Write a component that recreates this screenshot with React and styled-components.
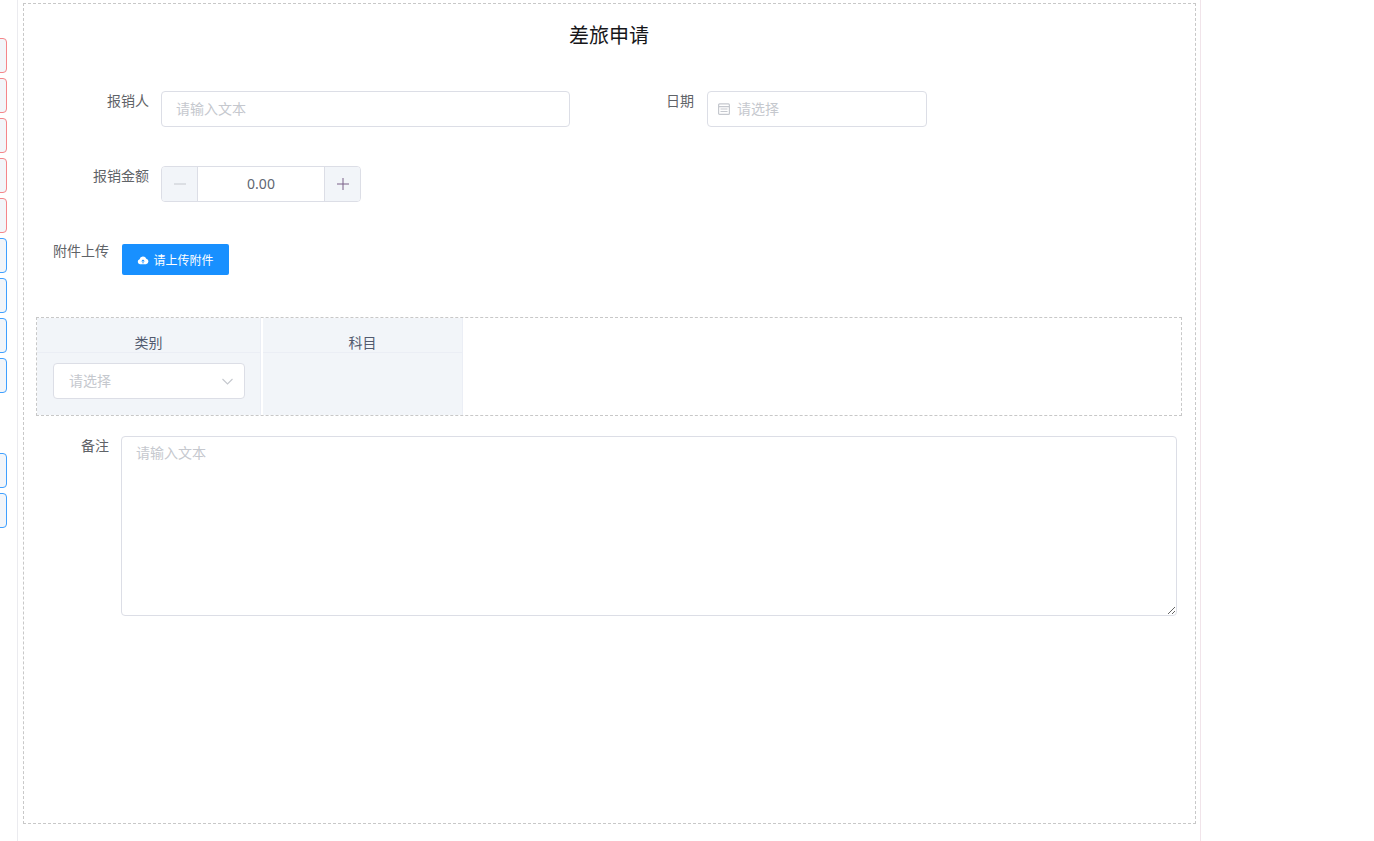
import React from "react";
import styled, { createGlobalStyle } from "styled-components";

const FONT = `"Noto Sans CJK SC", "Noto Sans", sans-serif`;

const Global = createGlobalStyle`
  html, body { margin: 0; padding: 0; height: 100%; background: #fff; overflow: hidden; }
  #root { height: 841px; }
  * { box-sizing: border-box; }
  body { font-family: ${FONT}; font-size: 14px; color: #515a6e; }
  ::placeholder { color: #c5c8ce; opacity: 1; }
`;

const Page = styled.div`
  display: flex;
  height: 841px;
  width: 1374px;
`;

const Palette = styled.aside`
  width: 17px;
  flex: none;
  overflow: hidden;
  padding-top: 38px;
  display: flex;
  flex-direction: column;
`;

const PaletteGroup = styled.div`
  display: flex;
  flex-direction: column;
  gap: 5px;
  margin-bottom: ${(p) => p.$after || 5}px;
`;

const PaletteItem = styled.div`
  width: 20px;
  height: 35px;
  margin-left: -13px;
  background: #f2f5f9;
  border-radius: 4px;
  border: 1px solid ${(p) => (p.$tone === "red" ? "#f5868a" : "#40a0ff")};
`;

const Canvas = styled.main`
  width: 1184px;
  flex: none;
  height: 841px;
  border-left: 1px solid #ebebef;
  border-right: 1px solid #f1e4ea;
  padding: 3px 4px 17px 5px;
`;

const Frame = styled.section`
  height: 821px;
  border: 1px dashed #c8c8c8;
  padding: 0 12px;
`;

const Title = styled.h1`
  margin: 0;
  height: 62px;
  padding: 16px 1px 0 0;
  text-align: center;
  font-size: 20px;
  line-height: 30px;
  font-weight: 400;
  color: #17171a;
`;

const Row = styled.div`
  display: flex;
  align-items: flex-start;
  margin-top: ${(p) => p.$top}px;
  height: ${(p) => p.$h}px;
`;

const Label = styled.label`
  width: ${(p) => p.$w}px;
  flex: none;
  padding-right: ${(p) => p.$pr || 12}px;
  text-align: right;
  font-size: 14px;
  line-height: 20px;
  color: #5f6368;
  margin-top: ${(p) => p.$mt ?? -1}px;
`;

const TextInput = styled.input`
  width: ${(p) => p.$w}px;
  height: 36px;
  border: 1px solid #dcdee6;
  border-radius: 4px;
  padding: 0 14px 2px 14px;
  font: 14px ${FONT};
  color: #515a6e;
  background: #fff;
  outline: none;
`;

const DateBox = styled.div`
  width: 220px;
  height: 36px;
  border: 1px solid #dcdee6;
  border-radius: 4px;
  display: flex;
  align-items: center;
  padding-left: 10px;
  gap: 7px;
  color: #c5c8ce;
  font-size: 14px;
`;

const HintText = styled.span`
  line-height: 20px;
  margin-top: -2px;
`;

const Stepper = styled.div`
  width: 200px;
  height: 36px;
  border: 1px solid #dcdee6;
  border-radius: 4px;
  display: flex;
  overflow: hidden;
`;

const StepButton = styled.div`
  width: 36px;
  flex: none;
  background: #f2f5f9;
  display: flex;
  align-items: center;
  justify-content: center;
  border-${(p) => p.$side}: 1px solid #dcdee6;
`;

const StepValue = styled.div`
  flex: 1;
  text-align: center;
  font-size: 14px;
  line-height: 34px;
  color: #606672;
  font-family: "Noto Sans", sans-serif;
`;

const UploadButton = styled.button`
  width: 107px;
  height: 31px;
  border: 0;
  border-radius: 2px;
  background: #1890ff;
  color: #fff;
  font: 12px ${FONT};
  display: flex;
  align-items: center;
  justify-content: center;
  gap: 4px;
  padding: 0;
`;

const GridBox = styled.div`
  margin-top: 42px;
  width: 1146px;
  height: 99px;
  border: 1px dashed #c8c8c8;
  display: flex;
  gap: 2px;
`;

const Cell = styled.div`
  width: ${(p) => p.$w}px;
  background: #f2f5f9;
  border-right: 1px solid #ebeef5;
  display: flex;
  flex-direction: column;
`;

const CellHead = styled.div`
  height: 35px;
  border-bottom: 1px solid #ebeef5;
  text-align: center;
  font-size: 14px;
  line-height: 20px;
  padding-top: 14px;
  color: #515a6e;
`;

const CellBody = styled.div`
  padding: 10px 15px 10px 16px;
`;

const Select = styled.div`
  height: 36px;
  background: #fff;
  border: 1px solid #dcdee6;
  border-radius: 4px;
  display: flex;
  align-items: center;
  justify-content: space-between;
  padding: 0 11px 0 15px;
  color: #c5c8ce;
  font-size: 14px;
`;

const Notes = styled.textarea`
  display: block;
  width: 1056px;
  height: 180px;
  border: 1px solid #dcdee6;
  border-radius: 4px;
  padding: 5px 14px 6px 14px;
  font: 14px/20px ${FONT};
  color: #515a6e;
  outline: none;
  background: #fff;
  resize: vertical;
`;

const Minus = () => (
  <svg width="14" height="14" viewBox="0 0 14 14"><path d="M1 7h12" stroke="#c5c8ce" strokeWidth="1" fill="none" /></svg>
);
const Plus = () => (
  <svg width="14" height="14" viewBox="0 0 14 14"><path d="M1 7h12M7 1v12" stroke="#7a6088" strokeWidth="1" fill="none" /></svg>
);
const Calendar = () => (
  <svg width="12" height="12" viewBox="0 0 12 12" fill="none" stroke="#c5c8ce" strokeWidth="1.200">
    <rect x="0.600" y="0.900" width="10.800" height="10.500" rx="1" />
    <path d="M.6 3.700h10.800M2.500 6h7M2.500 8.500h7" />
  </svg>
);
const Chevron = () => (
  <svg width="11" height="7" viewBox="0 0 11 7" fill="none" stroke="#c5c8ce" strokeWidth="1.100"><path d="M.5 1 5.500 6l5-5" /></svg>
);
const Cloud = () => (
  <svg width="12" height="12" viewBox="0 0 12 12">
    <path d="M3 10.200A2.500 2.500 0 0 1 2.600 5.300 3.500 3.500 0 0 1 9.300 4.700 2.800 2.800 0 0 1 9 10.200Z" fill="#fff" />
    <path d="M6 9.400V6.200M4.600 7.300 6 5.900l1.400 1.400" stroke="#1890ff" strokeWidth="1" fill="none" />
  </svg>
);

export default function App() {
  return (
    <Page>
      <Global />
      <Palette>
        <PaletteGroup>
          {[0, 1, 2, 3, 4].map((i) => <PaletteItem key={i} $tone="red" />)}
        </PaletteGroup>
        <PaletteGroup $after={60}>
          {[0, 1, 2, 3].map((i) => <PaletteItem key={i} $tone="blue" />)}
        </PaletteGroup>
        <PaletteGroup>
          {[0, 1].map((i) => <PaletteItem key={i} $tone="blue" />)}
        </PaletteGroup>
      </Palette>
      <Canvas>
        <Frame>
          <Title>差旅申请</Title>
          <Row $top={25} $h={36}>
            <Label $w={125}>报销人</Label>
            <TextInput $w={409} placeholder="请输入文本" />
            <Label $w={137} $pr={13}>日期</Label>
            <DateBox><Calendar /><HintText>请选择</HintText></DateBox>
          </Row>
          <Row $top={39} $h={36}>
            <Label $w={125}>报销金额</Label>
            <Stepper>
              <StepButton $side="right"><Minus /></StepButton>
              <StepValue>0.00</StepValue>
              <StepButton $side="left"><Plus /></StepButton>
            </Stepper>
          </Row>
          <Row $top={42} $h={31}>
            <Label $w={86} $pr={13} $mt={-4}>附件上传</Label>
            <UploadButton><Cloud />请上传附件</UploadButton>
          </Row>
          <GridBox>
            <Cell $w={224}>
              <CellHead>类别</CellHead>
              <CellBody>
                <Select><HintText>请选择</HintText><Chevron /></Select>
              </CellBody>
            </Cell>
            <Cell $w={200}>
              <CellHead>科目</CellHead>
            </Cell>
          </GridBox>
          <Row $top={20} $h={180}>
            <Label $w={85}>备注</Label>
            <Notes placeholder="请输入文本" />
          </Row>
        </Frame>
      </Canvas>
    </Page>
  );
}
